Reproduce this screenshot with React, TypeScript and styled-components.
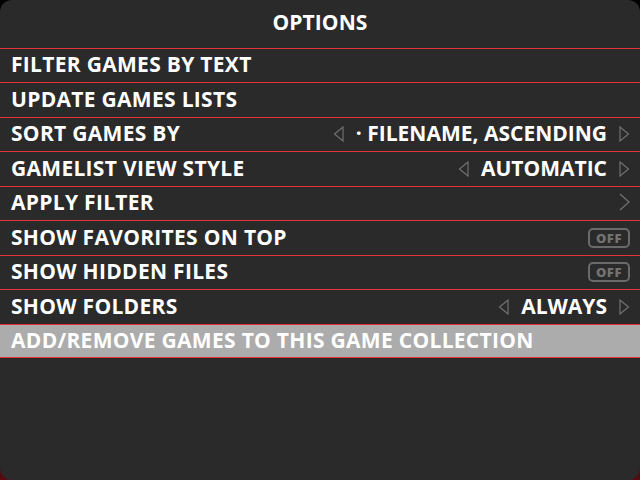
import React from "react";
import styled, { createGlobalStyle } from "styled-components";

const Global = createGlobalStyle`
  html, body {
    margin: 0;
    padding: 0;
    width: 640px;
    height: 480px;
    overflow: hidden;
    background: linear-gradient(#000 0%, #000 85%, #5a0a10 100%);
  }
  * { box-sizing: border-box; }
`;

const Panel = styled.div`
  width: 640px;
  height: 480px;
  background: #2a2a2a;
  border-radius: 12px;
  display: flex;
  flex-direction: column;
  font-family: "Open Sans", "DejaVu Sans", sans-serif;
  font-weight: 700;
  color: #fff;
  overflow: hidden;
`;

const Header = styled.div`
  height: 47.5px;
  display: flex;
  align-items: center;
  justify-content: center;
  font-size: 21px;
  letter-spacing: 0.1px;
  padding-bottom: 3px;
`;

const Row = styled.div<{ $selected?: boolean; $last?: boolean }>`
  height: 34.5px;
  border-top: 1px solid #e5323a;
  border-bottom: ${(p) => (p.$last ? "1px solid #e5323a" : "none")};
  background: ${(p) => (p.$selected ? "#acacac" : "transparent")};
  display: flex;
  align-items: center;
  padding: 0 10px 2px 11px;
  font-size: 21px;
  letter-spacing: 0.3px;
`;

const Label = styled.span`
  flex: 1;
  white-space: nowrap;
`;

const Value = styled.span`
  display: flex;
  align-items: center;
  padding-top: 2px;
`;

const ValueText = styled.span`
  margin: -2px 12px 0 12px;
  white-space: nowrap;
  letter-spacing: 0;
`;

const Toggle = styled.span`
  width: 42px;
  height: 20px;
  margin-top: 2px;
  border: 2px solid #6a6a6a;
  border-radius: 5px;
  color: #727272;
  font-size: 13px;
  font-weight: 800;
  display: flex;
  align-items: center;
  justify-content: center;
  letter-spacing: 0.6px;
`;

const Arrow = ({ dir }: { dir: "left" | "right" }) => (
  <svg width="11" height="16" viewBox="0 0 11 16">
    {dir === "left" ? (
      <polygon points="10,1 1.5,8 10,15" fill="none" stroke="#707070" strokeWidth="1.2" />
    ) : (
      <polygon points="1,1 9.5,8 1,15" fill="none" stroke="#707070" strokeWidth="1.2" />
    )}
  </svg>
);

const Chevron = () => (
  <svg width="11" height="18" viewBox="0 0 11 18">
    <polyline points="1,1 10,9 1,17" fill="none" stroke="#707070" strokeWidth="1.3" />
  </svg>
);

type Item =
  | { label: string; kind: "plain" }
  | { label: string; kind: "list"; value: string }
  | { label: string; kind: "toggle" }
  | { label: string; kind: "more" };

const items: Item[] = [
  { label: "FILTER GAMES BY TEXT", kind: "plain" },
  { label: "UPDATE GAMES LISTS", kind: "plain" },
  { label: "SORT GAMES BY", kind: "list", value: "· FILENAME, ASCENDING" },
  { label: "GAMELIST VIEW STYLE", kind: "list", value: "AUTOMATIC" },
  { label: "APPLY FILTER", kind: "more" },
  { label: "SHOW FAVORITES ON TOP", kind: "toggle" },
  { label: "SHOW HIDDEN FILES", kind: "toggle" },
  { label: "SHOW FOLDERS", kind: "list", value: "ALWAYS" },
];

export default function App() {
  return (
    <>
      <Global />
      <Panel>
        <Header>OPTIONS</Header>
        {items.map((it) => (
          <Row key={it.label}>
            <Label>{it.label}</Label>
            {it.kind === "list" && (
              <Value>
                <Arrow dir="left" />
                <ValueText>{it.value}</ValueText>
                <Arrow dir="right" />
              </Value>
            )}
            {it.kind === "toggle" && <Toggle>OFF</Toggle>}
            {it.kind === "more" && <Chevron />}
          </Row>
        ))}
        <Row $selected $last>
          <Label>ADD/REMOVE GAMES TO THIS GAME COLLECTION</Label>
        </Row>
      </Panel>
    </>
  );
}
